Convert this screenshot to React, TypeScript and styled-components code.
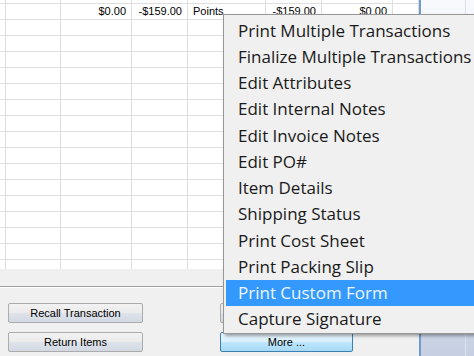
import React from "react";
import styled, { createGlobalStyle } from "styled-components";

const GlobalStyle = createGlobalStyle`
  html, body {
    margin: 0;
    padding: 0;
    background: #f0f0f0;
  }
`;

const Screen = styled.div`
  position: relative;
  width: 474px;
  height: 356px;
  overflow: hidden;
  display: flex;
  background: #f0f0f0;
  font-family: "Liberation Sans", Arial, sans-serif;
`;

const LeftPane = styled.div`
  width: 419px;
  display: flex;
  flex-direction: column;
`;

const RightPane = styled.div`
  flex: 1;
  border-left: 2px solid #6f9bd1;
  background: linear-gradient(#f7f9fc 0%, #dfe6f1 60%, #c6d0e2 100%);
  display: flex;
  justify-content: flex-end;
`;

const RightLine = styled.div`
  width: 1px;
  margin-right: 8px;
  background: #dde3ec;
`;

const GridBox = styled.div`
  height: 269px;
  overflow: hidden;
  background: #fff;
`;

const Rows = styled.div`
  margin-top: -12px;
`;

const Row = styled.div`
  display: grid;
  grid-template-columns: 5px 56px 71px 56px 78px 56px 71px 1fr;
  height: 16px;
  border-bottom: 1px solid #dedede;
  box-sizing: border-box;
`;

const Cell = styled.div<{ $right?: boolean }>`
  border-right: 1px solid #dedede;
  font-size: 11px;
  line-height: 15px;
  color: #000;
  white-space: nowrap;
  overflow: hidden;
  text-align: ${(p) => (p.$right ? "right" : "left")};
  padding: ${(p) => (p.$right ? "0 5px 0 0" : "0 0 0 5px")};
`;

const Footer = styled.div`
  flex: 1;
  display: flex;
  flex-direction: column;
`;

const Strip = styled.div`
  height: 17px;
  border-bottom: 1px solid #a0a0a0;
  box-shadow: 0 1px 0 #fff;
`;

const Buttons = styled.div`
  display: grid;
  grid-template-columns: 135px 133px;
  column-gap: 77px;
  row-gap: 9px;
  padding: 16px 0 0 8px;
`;

const Button = styled.div<{ $focus?: boolean }>`
  height: 20px;
  box-sizing: border-box;
  border: 1px solid ${(p) => (p.$focus ? "#3c7fb1" : "#acacac")};
  border-radius: 2px;
  background: ${(p) =>
    p.$focus
      ? "linear-gradient(#eaf6fd 0%, #d9f0fc 50%, #bee6fd 51%, #a7d9f5 100%)"
      : "linear-gradient(#f2f2f2 0%, #ebebeb 50%, #dfe3ea 51%, #d2d9e4 100%)"};
  display: flex;
  align-items: center;
  justify-content: center;
  font-size: 11px;
  color: #000;
`;

const Menu = styled.div`
  position: absolute;
  left: 223px;
  top: 14px;
  width: 290px;
  height: 320px;
  box-sizing: border-box;
  padding: 2px;
  background: #f0f0f0;
  border: 1px solid #979797;
  box-shadow: 2px 2px 3px rgba(0, 0, 0, 0.35);
  font-family: "Open Sans", "Noto Sans", sans-serif;
`;

const Item = styled.div<{ $active?: boolean }>`
  height: 26.25px;
  display: flex;
  align-items: center;
  padding-left: 12px;
  font-size: 17px;
  white-space: nowrap;
  color: ${(p) => (p.$active ? "#eef5ff" : "#1a1a1a")};
  background: ${(p) => (p.$active ? "#3399ff" : "transparent")};
`;

type RowData = string[];

const rows: RowData[] = [
  ["", "", "", "", "", "", "", ""],
  ["", "", "$0.00", "-$159.00", "Points", "-$159.00", "$0.00", ""],
];
for (let i = 0; i < 16; i++) rows.push(["", "", "", "", "", "", "", ""]);

const rightCols = [2, 3, 5, 6];

const items = [
  "Print Multiple Transactions",
  "Finalize Multiple Transactions",
  "Edit Attributes",
  "Edit Internal Notes",
  "Edit Invoice Notes",
  "Edit PO#",
  "Item Details",
  "Shipping Status",
  "Print Cost Sheet",
  "Print Packing Slip",
  "Print Custom Form",
  "Capture Signature",
];

export default function App() {
  return (
    <>
      <GlobalStyle />
      <Screen>
        <LeftPane>
          <GridBox>
            <Rows>
              {rows.map((r, i) => (
                <Row key={i}>
                  {r.map((c, j) => (
                    <Cell key={j} $right={rightCols.includes(j)}>
                      {c}
                    </Cell>
                  ))}
                </Row>
              ))}
            </Rows>
          </GridBox>
          <Footer>
            <Strip />
            <Buttons>
              <Button>Recall Transaction</Button>
              <Button />
              <Button>Return Items</Button>
              <Button $focus>More ...</Button>
            </Buttons>
          </Footer>
        </LeftPane>
        <RightPane>
          <RightLine />
        </RightPane>
        <Menu>
          {items.map((t) => (
            <Item key={t} $active={t === "Print Custom Form"}>
              {t}
            </Item>
          ))}
        </Menu>
      </Screen>
    </>
  );
}
